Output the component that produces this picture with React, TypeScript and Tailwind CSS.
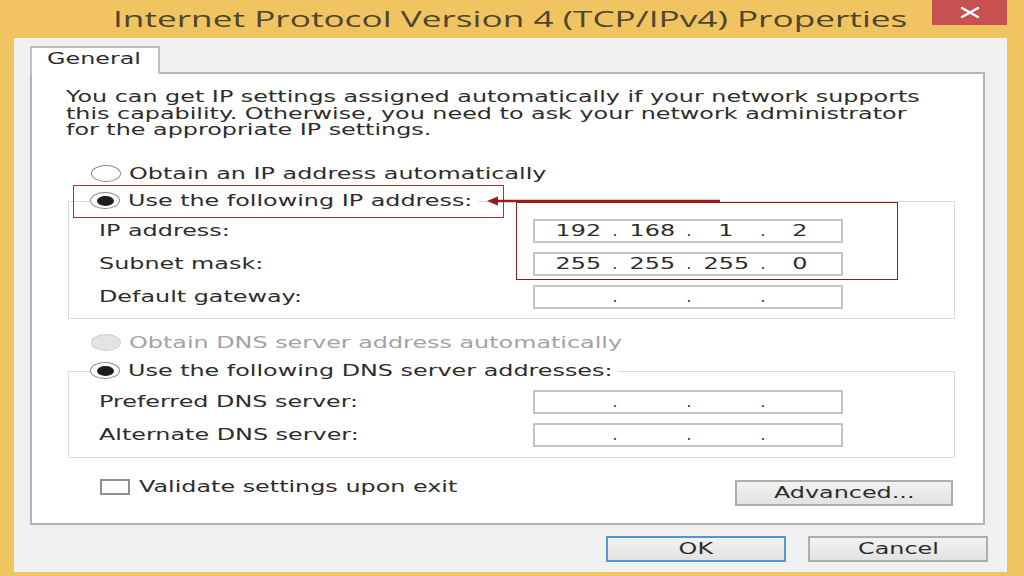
import React from "react";

function T({ children, className = "" }: { children: React.ReactNode; className?: string }) {
  return (
    <span className={`inline-block origin-left scale-x-[1.59] whitespace-nowrap ${className}`}>
      {children}
    </span>
  );
}

function TC({ children, className = "" }: { children: React.ReactNode; className?: string }) {
  return (
    <span className={`inline-block origin-center scale-x-[1.59] whitespace-nowrap ${className}`}>
      {children}
    </span>
  );
}

function Radio({ checked = false, disabled = false }: { checked?: boolean; disabled?: boolean }) {
  return (
    <div
      className={
        disabled
          ? "w-[30px] h-[17px] shrink-0 rounded-[50%] border border-[#cfcfcf] bg-[#e4e4e4]"
          : "w-[30px] h-[17px] shrink-0 rounded-[50%] border border-[#8a8a8a] bg-white flex items-center justify-center"
      }
    >
      {checked && <div className="w-[17px] h-[10px] rounded-[50%] bg-[#1e1e1e]" />}
    </div>
  );
}

function IpField({ values }: { values: string[] }) {
  return (
    <div className="w-[310px] h-[24px] shrink-0 border-2 border-[#c4c4c4] bg-white flex items-center pl-[10px]">
      {values.map((v, i) => (
        <div key={i} className="w-[75px] flex items-center">
          <div className="flex-1 text-center">
            <TC>{v}</TC>
          </div>
          <div className="w-[8px] text-center">{i < 3 ? "." : ""}</div>
        </div>
      ))}
    </div>
  );
}

function FieldRow({ label, values, first = false }: { label: string; values: string[]; first?: boolean }) {
  return (
    <div className={`${first ? "mt-[6px]" : "mt-[9px]"} h-[24px] flex items-center`}>
      <div className="w-[464px] pl-[30px]">
        <T>{label}</T>
      </div>
      <IpField values={values} />
    </div>
  );
}

export default function App() {
  const empty = ["", "", "", ""];
  return (
    <div className="relative w-[1024px] h-[576px] overflow-hidden bg-[#f1c462] font-['DejaVu_Sans',sans-serif] text-[15px] text-[#2d2d2d] leading-[20px]">
      {/* Title bar */}
      <div className="flex h-[38px]">
        <div className="pl-[113px] leading-[36px] text-[22px] text-[#4d4630] font-['Open_Sans',sans-serif]">
          <span className="inline-block origin-left scale-x-[1.6] whitespace-nowrap">
            Internet Protocol Version 4 (TCP/IPv4) Properties
          </span>
        </div>
        <div className="ml-auto mr-[17px] w-[75px] h-[25px] bg-[#c75050] flex items-center justify-center">
          <svg width="20" height="11" viewBox="0 0 20 11">
            <path d="M2 1 L18 10 M18 1 L2 10" stroke="white" strokeWidth="2.4" strokeLinecap="round" />
          </svg>
        </div>
      </div>

      {/* Client area */}
      <div className="ml-[14px] mr-[17px] h-[534px] bg-[#f0f0f0] pt-[8px] pl-[16px] pr-[22px] flex flex-col">
        {/* Tab */}
        <div className="relative z-10 -mb-[2px] w-[130px] h-[28px] bg-white border-2 border-b-0 border-[#c0c0c0] pl-[15px] leading-[22px]">
          <T>General</T>
        </div>

        {/* Panel */}
        <div className="h-[453px] border-2 border-[#b4b4b4] bg-white flex flex-col pl-[34px]">
          <div className="pt-[15px] leading-[16.5px]">
            <div>
              <T>You can get IP settings assigned automatically if your network supports</T>
            </div>
            <div>
              <T>this capability. Otherwise, you need to ask your network administrator</T>
            </div>
            <div>
              <T>for the appropriate IP settings.</T>
            </div>
          </div>

          <div className="mt-[23px] ml-[25px] h-[24px] flex items-center gap-[8px]">
            <Radio />
            <T>Obtain an IP address automatically</T>
          </div>

          {/* Group 1 */}
          <div className="mt-[15px] ml-[2px] mr-[28px] border border-[#dcdcdc] flex flex-col pb-[9px]">
            <div className="-mt-[13px] ml-[21px] h-[24px] self-start flex items-center gap-[8px] bg-white">
              <Radio checked />
              <T className="bg-white pr-[3px]">Use the following IP address:</T>
            </div>
            <FieldRow first label="IP address:" values={["192", "168", "1", "2"]} />
            <FieldRow label="Subnet mask:" values={["255", "255", "255", "0"]} />
            <FieldRow label="Default gateway:" values={empty} />
          </div>

          <div className="mt-[12px] ml-[25px] h-[24px] flex items-center gap-[8px] text-[#a3a3a3]">
            <Radio disabled />
            <T>Obtain DNS server address automatically</T>
          </div>

          {/* Group 2 */}
          <div className="mt-[16px] ml-[2px] mr-[28px] border border-[#dcdcdc] flex flex-col pb-[10px]">
            <div className="-mt-[13px] ml-[21px] h-[24px] self-start flex items-center gap-[8px] bg-white">
              <Radio checked />
              <T className="bg-white pr-[3px]">Use the following DNS server addresses:</T>
            </div>
            <div className="mt-[7px] h-[24px] flex items-center">
              <div className="w-[464px] pl-[30px]">
                <T>Preferred DNS server:</T>
              </div>
              <IpField values={empty} />
            </div>
            <FieldRow label="Alternate DNS server:" values={empty} />
          </div>

          {/* Validate + Advanced */}
          <div className="mt-[17px] flex items-start">
            <div className="ml-[34px] h-[24px] flex items-center gap-[9px]">
              <div className="w-[30px] h-[16px] border-2 border-[#8e8e8e] bg-white" />
              <T>Validate settings upon exit</T>
            </div>
            <div className="ml-auto mr-[30px] mt-[5px] w-[218px] h-[26px] border-2 border-[#adadad] bg-[linear-gradient(#f2f2f2,#e2e2e2)] flex items-center justify-center">
              <TC>Advanced...</TC>
            </div>
          </div>
        </div>

        {/* Buttons */}
        <div className="mt-[11px] -mr-[3px] flex justify-end gap-[22px]">
          <div className="w-[180px] h-[26px] border-2 border-[#5296d6] bg-[linear-gradient(#f2f2f2,#e2e2e2)] flex items-center justify-center">
            <TC>OK</TC>
          </div>
          <div className="w-[180px] h-[26px] border-2 border-[#adadad] bg-[linear-gradient(#f2f2f2,#e2e2e2)] flex items-center justify-center">
            <TC>Cancel</TC>
          </div>
        </div>
      </div>

      {/* Annotations */}
      <div className="absolute left-[73px] top-[185px] w-[431px] h-[33px] border-[1.5px] border-[#a53535]" />
      <div className="absolute left-[516px] top-[202px] w-[382px] h-[78px] border-[1.5px] border-[#8b1f1f]" />
      <svg className="absolute left-[484px] top-[194px]" width="240" height="14" viewBox="0 0 240 14">
        <path d="M12 7 L236 7" stroke="#9b1b1b" strokeWidth="2.5" />
        <path d="M3 7 L14 2.5 L14 11.5 Z" fill="#9b1b1b" />
      </svg>
    </div>
  );
}
